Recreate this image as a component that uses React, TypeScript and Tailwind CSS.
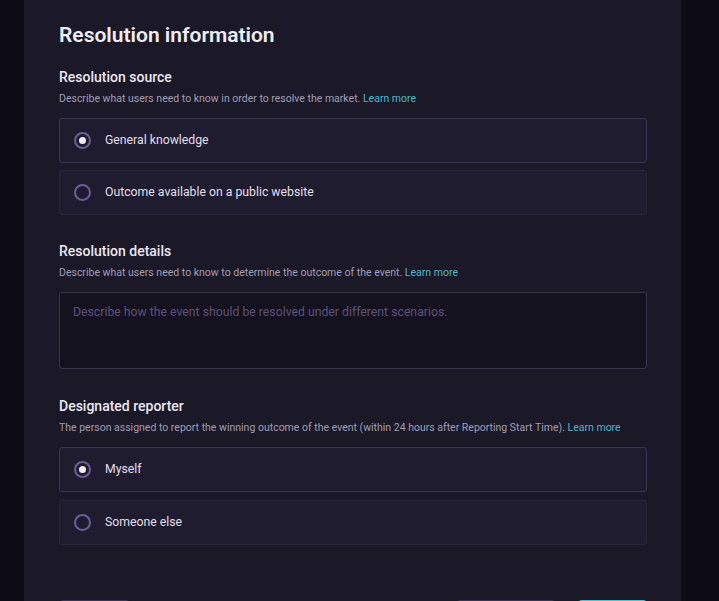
import React from "react";

function Radio({ checked }: { checked: boolean }) {
  return (
    <span className="flex h-[17px] w-[17px] shrink-0 items-center justify-center rounded-full border-2 border-[#6a5f95]">
      {checked && <span className="h-[7px] w-[7px] rounded-full bg-[#f1eef8]" />}
    </span>
  );
}

function Option({ label, checked }: { label: string; checked: boolean }) {
  return (
    <div
      className={
        "flex h-[45px] items-center gap-[14px] rounded-[3px] border bg-[#201c30] pl-[14px] " +
        (checked ? "border-[#3a3450]" : "border-[#28243a]")
      }
    >
      <Radio checked={checked} />
      <span className="text-[12.25px] text-[#e2dfea]">{label}</span>
    </div>
  );
}

function Heading({ title, desc, className }: { title: string; desc: string; className?: string }) {
  return (
    <div className={className}>
      <div className="text-[14px] font-medium leading-[20px] text-[#ebe8f2]">{title}</div>
      <div className="mt-[4px] text-[10.5px] leading-[16px] text-[#a29eb2]">
        {desc} <span className="text-[#4fb6c8]">Learn more</span>
      </div>
    </div>
  );
}

export default function App() {
  return (
    <div
      className="flex h-[601px] w-full overflow-hidden bg-[#0d0b16]"
      style={{ fontFamily: "Roboto, 'Noto Sans', sans-serif" }}
    >
      <div className="ml-[24px] h-full w-[657px] bg-[#1b1827] pl-[35px] pr-[34px] pt-[21px]">
        <div className="text-[21px] font-semibold leading-[28px] text-[#efedf5]">Resolution information</div>

        <Heading
          className="mt-[18px]"
          title="Resolution source"
          desc="Describe what users need to know in order to resolve the market."
        />
        <div className="mt-[11px] flex flex-col gap-[7px]">
          <Option label="General knowledge" checked={true} />
          <Option label="Outcome available on a public website" checked={false} />
        </div>

        <Heading
          className="mt-[26px]"
          title="Resolution details"
          desc="Describe what users need to know to determine the outcome of the event."
        />
        <div className="mt-[11px] h-[77px] rounded-[3px] border border-[#38334a] bg-[#15121f] px-[13px] pt-[10px] text-[12.25px] text-[#5b5179]">
          Describe how the event should be resolved under different scenarios.
        </div>

        <Heading
          className="mt-[27px]"
          title="Designated reporter"
          desc="The person assigned to report the winning outcome of the event (within 24 hours after Reporting Start Time)."
        />
        <div className="mt-[11px] flex flex-col gap-[8px]">
          <Option label="Myself" checked={true} />
          <Option label="Someone else" checked={false} />
        </div>

        <div className="mt-[55px] flex items-start">
          <div className="h-[36px] w-[71px] rounded-[4px] border border-[#3a3450]" />
          <div className="ml-auto h-[36px] w-[100px] rounded-[4px] border border-[#3a3450]" />
          <div className="ml-[22px] h-[36px] w-[69px] rounded-[4px] bg-[#4ec4d8]" />
        </div>
      </div>
    </div>
  );
}
